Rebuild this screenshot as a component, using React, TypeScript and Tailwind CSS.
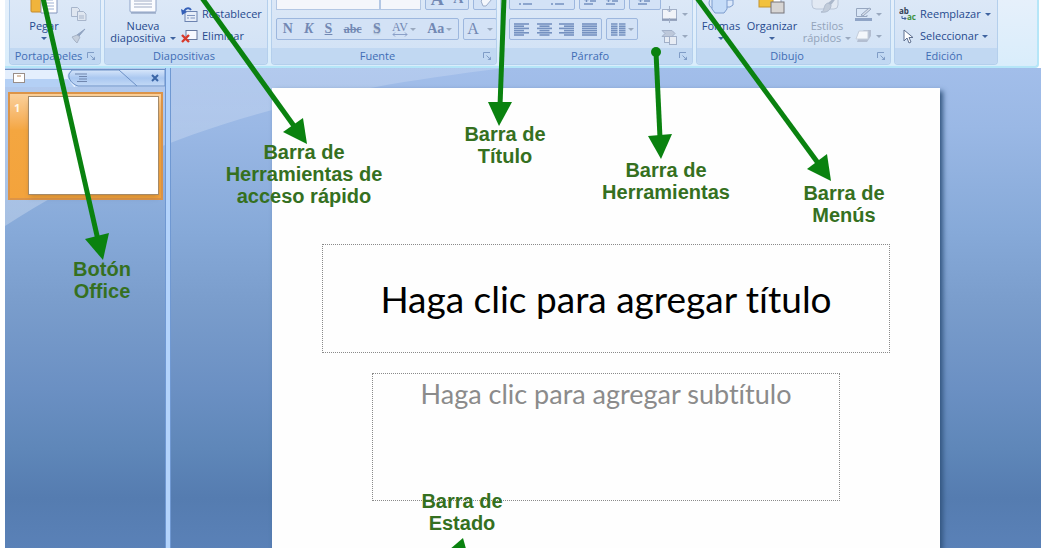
import type { ReactNode } from "react"

function Caret({ faded }: { faded?: boolean }) {
    return (
        <svg width="6" height="3" viewBox="0 0 6 3" className="shrink-0" aria-hidden="true">
            <path d="M0 0h6L3 3z" fill={faded ? "#9aa9bf" : "#3f639f"} />
        </svg>
    )
}

function Group({ title, className, launcher = true, children }: { title: string; className: string; launcher?: boolean; children: ReactNode }) {
    return (
        <section className={`flex shrink-0 flex-col overflow-hidden rounded-b border-x border-b border-[#b4cfec] bg-linear-to-b from-[#dce8f7] to-[#d0e1f5] ${className}`}>
            <div className="flex h-12 items-end overflow-hidden">{children}</div>
            <div className="flex h-4 items-center bg-[#c1d8f2] pr-1 text-[#3f6db5]">
                <h2 className="flex-1 text-center">{title}</h2>
                {launcher && (
                    <button aria-label={`Más opciones de ${title}`}>
                        <svg width="9" height="9" viewBox="0 0 9 9" fill="none" stroke="#7f9cc6">
                            <path d="M.5 6V.5H7" />
                            <path d="M3.500 3.500l3 3" />
                            <path d="M8 4.500V8H4.500z" fill="#7f9cc6" stroke="none" />
                        </svg>
                    </button>
                )}
            </div>
        </section>
    )
}

// Big button: picture on top, one or two lines of text below
function BigButton({ icon, lines, faded, className = "" }: { icon: ReactNode; lines: string[]; faded?: boolean; className?: string }) {
    const twoLines = lines.length > 1
    return (
        <button className={`flex shrink-0 flex-col items-center pb-1 leading-3 ${faded ? "text-[#93a3ba]" : "text-[#264a8e]"} ${className}`}>
            <span className="mb-1.5 flex h-7 items-end">{icon}</span>
            <span>{lines[0]}</span>
            <span className="flex h-3 items-center gap-1">
                {twoLines && lines[1]}
                <Caret faded={faded} />
            </span>
        </button>
    )
}

function SmallButton({ icon, label, text, caret, faded }: { icon: ReactNode; label?: string; text?: string; caret?: boolean; faded?: boolean }) {
    return (
        <button aria-label={label} className="flex h-[22px] items-center gap-1 text-[#264a8e]">
            {icon}
            {text}
            {caret && <Caret faded={faded} />}
        </button>
    )
}

function ToolBox({ className = "", children }: { className?: string; children: ReactNode }) {
    return (
        <div className={`flex h-[22px] shrink-0 items-center justify-around rounded-xs border border-[#9db7de] bg-[#d3e2f6] ${className}`}>
            {children}
        </div>
    )
}

function AlignIcon({ kind }: { kind: "left" | "center" | "right" | "full" | "columns" }) {
    const rows = [0, 1, 2, 3, 4, 5]
    return (
        <svg width="15" height="13" viewBox="0 0 15 13" fill="none" stroke="#7591c0" strokeWidth="1.600">
            {rows.map((r) => {
                const y = r * 2.2 + 1
                const short = r % 2 === 1
                if (kind === "columns") return <path key={r} d={`M0 ${y}h6.500M8 ${y}h6.500`} />
                if (kind === "full" || !short) return <path key={r} d={`M0 ${y}h15`} />
                if (kind === "left") return <path key={r} d={`M0 ${y}h10`} />
                if (kind === "right") return <path key={r} d={`M5 ${y}h10`} />
                return <path key={r} d={`M2.500 ${y}h10`} />
            })}
        </svg>
    )
}

function ListIcon() {
    return (
        <svg width="16" height="16" viewBox="0 0 16 16" stroke="#7591c0" strokeWidth="1.500">
            <path d="M1 3h2M1 8h2M1 13h2M5 3h9M5 8h9M5 13h9" />
        </svg>
    )
}

function IndentIcon() {
    return (
        <svg width="16" height="16" viewBox="0 0 16 16" fill="none" stroke="#7591c0" strokeWidth="1.500">
            <path d="M1 3h13M7 7h8M7 10h6M1 13h9M1 8.500h5M3.500 6v5" />
        </svg>
    )
}

const pasteIcon = (
    <svg width="28" height="28" viewBox="0 0 28 28">
        <rect x="1" y="1" width="20" height="25" rx="1" fill="#f0b43c" stroke="#c58a2a" />
        <path d="M11 7h11l5 5v15H11z" fill="#fff" stroke="#8496bd" />
        <path d="M14 14h9M14 17h10M14 20h10M14 23h10" stroke="#9fb2d4" />
    </svg>
)

const newSlideIcon = (
    <svg width="28" height="26" viewBox="0 0 28 26">
        <rect x="1" y="1" width="26" height="23" rx="1" fill="#fbfcff" stroke="#8fa3c6" />
        <path d="M5 13h18M5 16h18M5 19h18" stroke="#9fabc4" />
        <path d="M2 25h25" stroke="#7e90b3" />
    </svg>
)

const copyIcon = (
    <svg width="17" height="14" viewBox="0 0 17 14" fill="#dfe6f0" stroke="#a7b5cb">
        <path d="M1.500.5h6l2 2v7h-8z" />
        <path d="M7.500 4.500h6l2.500 2.500v6.500H7.500z" />
        <path d="M9 9h5M9 11h5" />
    </svg>
)

const brushIcon = (
    <svg width="16" height="16" viewBox="0 0 16 16">
        <path d="M15 1L9 8l-2-1z" fill="#8fa2c0" stroke="#8fa2c0" />
        <path d="M2 9l5-2 3 2-3 6-2-2z" fill="#c5cfdd" stroke="#a7b3c6" />
    </svg>
)

const resetIcon = (
    <svg width="17" height="17" viewBox="0 0 17 17">
        <rect x="4" y="5.500" width="12" height="10" fill="#e6edf8" stroke="#6c83b0" />
        <path d="M6 12h2M9.500 12h4.500M6 9.500h8" stroke="#8096bf" />
        <path d="M3 6c1-4 5-5 7-2" fill="none" stroke="#3560b8" strokeWidth="2" />
        <path d="M0 3l1 6 5-3z" fill="#3560b8" />
    </svg>
)

const deleteIcon = (
    <svg width="17" height="15" viewBox="0 0 17 15">
        <rect x="5" y="1.500" width="11" height="9" fill="#f6f9ff" stroke="#66799f" />
        <path d="M1 6l7 7M8 6l-7 7" stroke="#d83a2c" strokeWidth="2.400" />
    </svg>
)

const boxGreyIcon = (
    <svg width="17" height="17" viewBox="0 0 17 17" fill="#f0f3f8" stroke="#a2b0c8">
        <rect x="1.500" y="3.500" width="14" height="11" />
        <path d="M1 13.500h15" stroke="#8e9db8" strokeWidth="2" />
        <path d="M8.500 0v6M6.500 4l2 2 2-2M8.500 17v-5" />
    </svg>
)

const smartArtIcon = (
    <svg width="17" height="17" viewBox="0 0 17 17" fill="#e7ecf4" stroke="#a2b0c8">
        <path d="M1 2.500h10l3 3-3 3H1l3-3z" fill="#bdc8da" />
        <rect x="3.500" y="8.500" width="7" height="6" />
        <rect x="8.500" y="8.500" width="7" height="8" />
    </svg>
)

const shapesIcon = (
    <svg width="30" height="28" viewBox="0 0 30 28" fill="#dce9fb" stroke="#7c9ccd">
        <circle cx="9" cy="17" r="6" />
        <path d="M15 14h12v5l-3 2H15z" />
        <path d="M6 12h15v11l-3 4h-9l-3-4z" fill="#c5dcf8" />
    </svg>
)

const arrangeIcon = (
    <svg width="28" height="28" viewBox="0 0 28 28">
        <rect x="7" y="3" width="16" height="14" fill="#fff" stroke="#8fa0bd" />
        <rect x="1" y="11" width="14" height="10" fill="#f2c13c" stroke="#c4942d" />
        <rect x="13" y="16" width="13" height="11" fill="#d7d5d4" stroke="#77747b" />
    </svg>
)

const stylesIcon = (
    <svg width="32" height="28" viewBox="0 0 32 28">
        <rect x="1" y="3" width="26" height="20" rx="4" fill="#e2e9f3" stroke="#bac6d8" />
        <path d="M30 6L20 19l-3-2z" fill="#aab7ca" />
        <path d="M10 26c4 0 2-8 7-9l3 2c0 5-4 8-10 7z" fill="#c2ccda" stroke="#aebbce" />
    </svg>
)

const outlineIcon = (
    <svg width="17" height="16" viewBox="0 0 17 16" fill="none" stroke="#96a6bf">
        <path d="M13 2.500H1.500v8H12V9" />
        <path d="M6 9l8-7 2 1-8 7z" fill="#d4dce8" />
        <path d="M0 13.500h17" strokeWidth="3" stroke="#8fa4c6" />
    </svg>
)

const effectsIcon = (
    <svg width="17" height="14" viewBox="0 0 17 14">
        <path d="M5 4l4-3h7v6l-4 6H2z" fill="#b3bed1" />
        <path d="M4 2h9v8H1z" fill="#f4f7fb" stroke="#c5cedb" />
    </svg>
)

const replaceIcon = (
    <svg width="17" height="16" viewBox="0 0 17 16" fill="none">
        <text x="0" y="8" fontSize="8" fontWeight="bold" fill="#333f55">ab</text>
        <text x="8" y="14" fontSize="8" fontWeight="bold" fill="#3d9142">ac</text>
        <path d="M3 10v2.500h4M5.500 11L7 12.500 5.500 14" stroke="#3f5f9b" />
    </svg>
)

const cursorIcon = (
    <svg width="17" height="15" viewBox="0 0 17 15">
        <path d="M5 1v11l3-3 2 5 2-1-2-4.500h4z" fill="#fff" stroke="#5f7090" />
    </svg>
)

function Ribbon() {
    return (
        <header className="mr-0.5 flex gap-[3px] overflow-hidden rounded-br border-r-2 border-b-2 border-[#b5e6f8] bg-linear-to-b from-[#e6f0fb] to-[#d9edfb] pb-px pl-1">
            <Group title="Portapapeles" className="w-[92px]">
                <BigButton icon={pasteIcon} lines={["Pegar"]} className="w-[68px]" />
                <div className="-ml-2 pb-px">
                    <SmallButton icon={copyIcon} label="Copiar" />
                    <SmallButton icon={brushIcon} label="Copiar formato" />
                </div>
            </Group>

            <Group title="Diapositivas" className="w-[164px]" launcher={false}>
                <BigButton icon={newSlideIcon} lines={["Nueva", "diapositiva"]} className="w-[76px]" />
                <div className="pb-px">
                    <SmallButton icon={resetIcon} text="Restablecer" />
                    <SmallButton icon={deleteIcon} text="Eliminar" />
                </div>
            </Group>

            <Group title="Fuente" className="w-[226px]">
                <div className="flex flex-col gap-2 pb-2 pl-1 font-['Liberation_Serif'] text-sm leading-4 font-bold text-[#7288b3]">
                    <div className="flex gap-1">
                        <div className="flex">
                            <select aria-label="Fuente" className="h-[22px] w-[104px] appearance-none border border-[#b3c7e4] bg-[#f4f6fb]" />
                            <select aria-label="Tamaño de fuente" className="h-[22px] w-[41px] appearance-none border border-[#b3c7e4] bg-[#f4f6fb]" />
                        </div>
                        <ToolBox className="w-11">
                            <button aria-label="Agrandar fuente" className="text-lg">A</button>
                            <button aria-label="Encoger fuente">A</button>
                        </ToolBox>
                        <ToolBox className="w-6">
                            <button aria-label="Borrar formato">
                                <svg width="16" height="16" viewBox="0 0 16 16">
                                    <path d="M4 10l6-6 5 4-6 7H6z" fill="#f4f7fc" stroke="#9cadc9" />
                                </svg>
                            </button>
                        </ToolBox>
                    </div>
                    <div className="flex gap-1">
                        <ToolBox className="w-[183px]">
                            <button aria-label="Negrita">N</button>
                            <button aria-label="Cursiva" className="italic">K</button>
                            <button aria-label="Subrayado" className="underline">S</button>
                            <button aria-label="Tachado" className="text-xs line-through">abc</button>
                            <button aria-label="Sombra" className="text-shadow-sm">S</button>
                            <button aria-label="Espaciado" className="flex items-center gap-0.5 text-xs font-normal">
                                <span className="flex flex-col items-center leading-[10px]">
                                    AV
                                    <svg width="16" height="5" viewBox="0 0 16 5" fill="none" stroke="#8ba0c8">
                                        <path d="M1 2.500h14M3 .5l-2 2 2 2M13 .5l2 2-2 2" />
                                    </svg>
                                </span>
                                <Caret faded />
                            </button>
                            <button aria-label="Mayúsculas" className="flex items-center gap-0.5">
                                Aa <Caret faded />
                            </button>
                        </ToolBox>
                        <ToolBox className="w-[34px]">
                            <button aria-label="Color de fuente" className="flex items-center gap-2 text-base leading-4 font-normal">
                                A <Caret faded />
                            </button>
                        </ToolBox>
                    </div>
                </div>
            </Group>

            <Group title="Párrafo" className="w-[193px]">
                <div className="flex flex-col gap-2 pb-2 pl-2">
                    <div className="flex gap-1">
                        <ToolBox className="w-[66px]">
                            <button aria-label="Viñetas"><ListIcon /></button>
                            <button aria-label="Numeración"><ListIcon /></button>
                        </ToolBox>
                        <ToolBox className="w-[46px]">
                            <button aria-label="Disminuir sangría"><IndentIcon /></button>
                            <button aria-label="Aumentar sangría"><IndentIcon /></button>
                        </ToolBox>
                        <ToolBox className="w-8">
                            <button aria-label="Interlineado"><IndentIcon /></button>
                        </ToolBox>
                    </div>
                    <div className="flex gap-1">
                        <ToolBox className="w-[93px]">
                            <button aria-label="Alinear a la izquierda"><AlignIcon kind="left" /></button>
                            <button aria-label="Centrar"><AlignIcon kind="center" /></button>
                            <button aria-label="Alinear a la derecha"><AlignIcon kind="right" /></button>
                            <button aria-label="Justificar"><AlignIcon kind="full" /></button>
                        </ToolBox>
                        <ToolBox className="w-8">
                            <button aria-label="Columnas" className="flex items-center gap-0.5">
                                <AlignIcon kind="columns" />
                                <Caret faded />
                            </button>
                        </ToolBox>
                    </div>
                </div>
                <div className="ml-auto pr-1.5 pb-px">
                    <SmallButton icon={boxGreyIcon} label="Alinear texto" caret faded />
                    <SmallButton icon={smartArtIcon} label="Convertir a SmartArt" caret faded />
                </div>
            </Group>

            <Group title="Dibujo" className="w-[195px]">
                <BigButton icon={shapesIcon} lines={["Formas"]} className="w-12" />
                <BigButton icon={arrangeIcon} lines={["Organizar"]} className="w-[54px]" />
                <BigButton icon={stylesIcon} lines={["Estilos", "rápidos"]} faded className="w-[56px]" />
                <div className="pb-px">
                    <SmallButton icon={outlineIcon} label="Contorno de forma" caret faded />
                    <SmallButton icon={effectsIcon} label="Efectos de forma" caret faded />
                </div>
            </Group>

            <Group title="Edición" className="w-[104px]" launcher={false}>
                <div className="pb-px pl-1">
                    <SmallButton icon={replaceIcon} text="Reemplazar" caret />
                    <SmallButton icon={cursorIcon} text="Seleccionar" caret />
                </div>
            </Group>
        </header>
    )
}

function SlidePanel() {
    return (
        <aside className="relative w-40 shrink-0">
            <div className="relative mt-px flex h-[18px] items-center bg-linear-to-b from-[#dbe9fb] via-[#a9c7f0] to-[#c7dcf7]">
                <svg className="absolute inset-0 h-full w-full" viewBox="0 0 160 18" preserveAspectRatio="none" fill="none">
                    <path d="M0 1h66c-5 4-5 10 4 15v2H0z" fill="#e4effd" />
                    <path d="M0 10h63l6 8H0z" fill="#b4d0f5" />
                    <path d="M0 .5h160M160 0v17H73c-6-2-10-7-9-12l3-4h47l18 16" stroke="#6c90c6" />
                </svg>
                <button aria-label="Diapositivas" className="relative ml-2">
                    <svg width="12" height="10" viewBox="0 0 12 10">
                        <rect x=".5" y=".5" width="11" height="9" fill="#fff" stroke="#998e88" />
                        <path d="M4 3h4" stroke="#b58b62" />
                    </svg>
                </button>
                <button aria-label="Esquema" className="relative ml-[50px]">
                    <svg width="12" height="10" viewBox="0 0 12 10" stroke="#7187ae">
                        <path d="M0 1h12M4 3.500h8M4 6h8M2 8.500h10" />
                    </svg>
                </button>
                <button aria-label="Cerrar" className="relative mr-1.5 ml-auto">
                    <svg width="8" height="8" viewBox="0 0 8 8" stroke="#3a65a6" strokeWidth="2">
                        <path d="M1 1l6 6M7 1L1 7" />
                    </svg>
                </button>
            </div>
            <div className="relative mt-[5px] mr-0.5 ml-[3px] flex border-2 border-[#dc9448] bg-linear-to-b from-[#fad09a] via-[#f4a640] via-35% to-[#f3a33c]">
                <span className="w-[18px] pt-1.5 pl-1 font-bold text-[#fff8ea]">1</span>
                <button aria-label="Diapositiva 1" className="mt-0.5 mr-0.5 mb-[3px] h-[99px] flex-1 border border-[#a58a68] bg-white shadow-md" />
            </div>
        </aside>
    )
}

function Workspace() {
    return (
        <div className="relative flex flex-1 overflow-hidden bg-[linear-gradient(to_bottom,#a2beea_0px,#9ab8e5_60px,#86a9d8_165px,#7a9dcc_235px,#6b90c3_320px,#5f87b9_380px,#557cb0_430px,#5a81b7_480px)]">
            <svg className="absolute top-0 left-0" width="500" height="160" viewBox="0 0 500 160">
                <defs>
                    <linearGradient id="glow" x1="0" y1="0" x2="0" y2="1">
                        <stop offset="0" stopColor="#fff" stopOpacity=".18" />
                        <stop offset="1" stopColor="#fff" stopOpacity=".26" />
                    </linearGradient>
                </defs>
                <path d="M0 0h500C400 12 330 25 267 42 180 65 80 105 0 158z" fill="url(#glow)" />
            </svg>
            <SlidePanel />
            <div className="relative w-[6px] shrink-0 border-x border-[#6f98d2] bg-[#b3d3fb]" />
            <main className="relative flex flex-1 flex-col px-[101px] pt-5">
                <div className="flex flex-1 flex-col bg-[#fefefe] pt-[156px] font-[Lato] [font-variant-ligatures:none] shadow-[3px_3px_5px_#33557f]">
                    <div className="mx-[50px] flex h-[109px] items-center justify-center border border-dotted border-[#8a8a8a] text-[37px] text-black">
                        Haga clic para agregar título
                    </div>
                    <div className="mx-[100px] mt-5 h-[128px] border border-dotted border-[#8a8a8a] pt-1 text-center text-[27px] leading-8 text-[#8b8b8b]">
                        Haga clic para agregar subtítulo
                    </div>
                </div>
            </main>
        </div>
    )
}

// Callouts drawn over the window
function Callout({ className, lines }: { className: string; lines: string[] }) {
    return (
        <p className={`absolute -translate-x-1/2 text-center text-xl leading-[22px] font-bold whitespace-nowrap text-[#35701f] ${className}`}>
            {lines.map((line) => (
                <span key={line} className="block">{line}</span>
            ))}
        </p>
    )
}

function Callouts() {
    return (
        <div className="pointer-events-none absolute inset-0 overflow-hidden font-['Liberation_Sans']">
            <svg className="absolute top-0 left-0" width="1043" height="560" viewBox="0 0 1043 560">
                <g stroke="#0a820f" strokeWidth="5">
                    <path d="M43 -2L98 240" />
                    <path d="M202 -2L294 126" />
                    <path d="M504 -2L500 106" />
                    <path d="M656 52L660 138" />
                    <path d="M697 -2L818 163" />
                </g>
                <g fill="#0a820f">
                    <circle cx="656" cy="52" r="5" />
                    <path d="M103 260L85 239l24-6z" />
                    <path d="M307 144l-24-12 20-14z" />
                    <path d="M499 126l-11-24h24z" />
                    <path d="M661 159l-13-23 24-2z" />
                    <path d="M831 181l-24-12 20-15z" />
                    <path d="M463 538l-21 18h26z" />
                </g>
            </svg>
            <Callout className="top-[258px] left-[102px]" lines={["Botón", "Office"]} />
            <Callout className="top-[141px] left-[304px]" lines={["Barra de", "Herramientas de", "acceso rápido"]} />
            <Callout className="top-[123px] left-[505px]" lines={["Barra de", "Título"]} />
            <Callout className="top-[159px] left-[666px]" lines={["Barra de", "Herramientas"]} />
            <Callout className="top-[182px] left-[844px]" lines={["Barra de", "Menús"]} />
            <Callout className="top-[490px] left-[462px]" lines={["Barra de", "Estado"]} />
        </div>
    )
}

export default function App() {
    return (
        <div className="relative flex h-screen flex-col overflow-hidden bg-white font-['Open_Sans'] text-[11px] leading-4 pr-0.5 pl-[5px]">
            <Ribbon />
            <Workspace />
            <Callouts />
        </div>
    )
}
